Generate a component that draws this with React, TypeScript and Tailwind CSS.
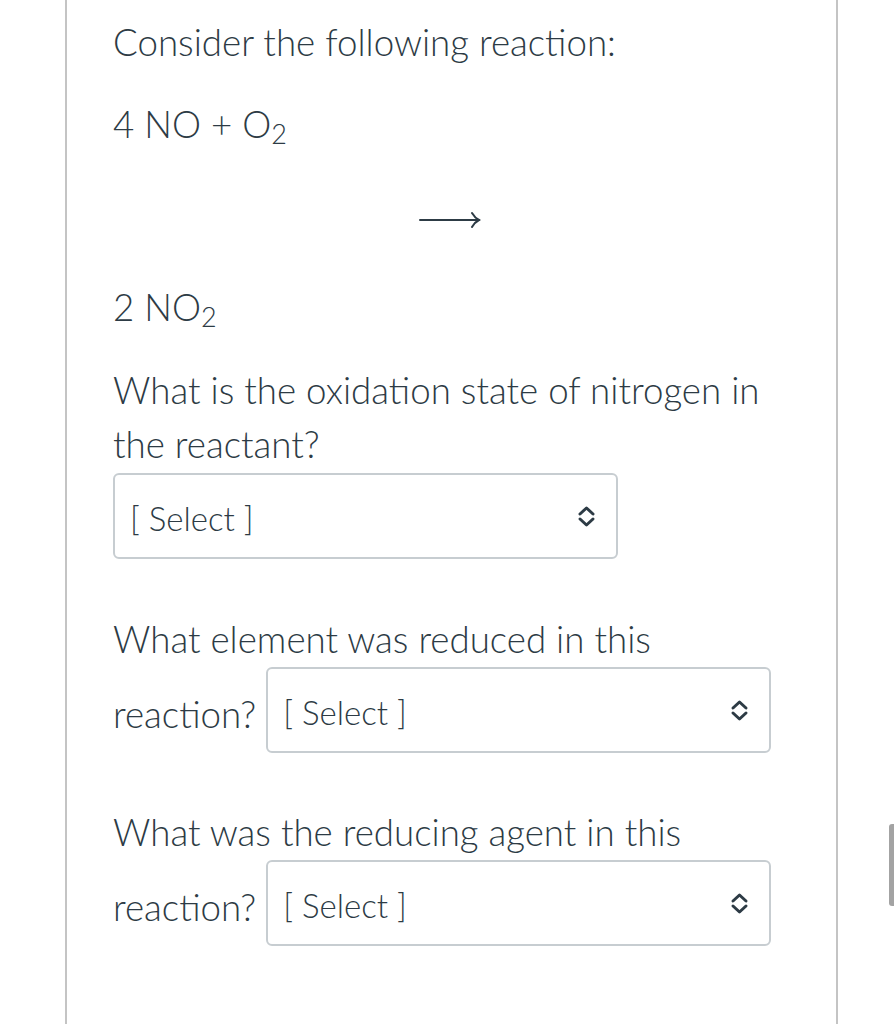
import React from "react";

const Chevron = () => (
  <svg width="19" height="23" viewBox="0 0 19 23" fill="none" stroke="#2d3b45" strokeWidth="3" strokeLinecap="round" strokeLinejoin="round">
    <path d="M3 9 L9.5 3 L16 9" />
    <path d="M3 14 L9.5 20 L16 14" />
  </svg>
);

const SelectBox = ({ className = "" }: { className?: string }) => (
  <div
    className={`flex items-center justify-between h-[86px] w-[505px] shrink-0 border-2 border-[#c7cdd1] rounded-[6px] bg-white pl-[15px] pr-[20px] ${className}`}
  >
    <span className="text-[33px] leading-[54px] pt-[3px] text-[#2d3b45] font-light">[ Select ]</span>
    <Chevron />
  </div>
);

const Arrow = () => (
  <svg width="62" height="20" viewBox="0 0 62 20" fill="none" stroke="#2d3b45" strokeWidth="2" strokeLinecap="round">
    <path d="M1 10 H60" />
    <path d="M53 3 Q56 8 60 10 Q56 12 53 17" />
  </svg>
);

export default function App() {
  return (
    <div className="relative min-h-[1024px] bg-white overflow-hidden" style={{ fontFamily: "Lato, 'Open Sans', sans-serif" }}>
      <div className="ml-[65px] w-[773px] min-h-[1024px] border-x-2 border-[#c4c4c4] pl-[46px] pr-[10px] pt-[15px] text-[#2d3b45] text-[36.7px] font-light leading-[54px]">
        <p>Consider the following reaction:</p>
        <p className="mt-[28px]">
          4 NO + O<sub className="text-[27px] relative top-[6px] align-baseline">2</sub>
        </p>
        <div className="flex justify-center pr-[40px] mt-[59px]">
          <Arrow />
        </div>
        <p className="mt-[50px]">
          2 NO<sub className="text-[27px] relative top-[6px] align-baseline">2</sub>
        </p>
        <p className="mt-[29px]">
          What is the oxidation state of nitrogen in
          <br />
          the reactant?
        </p>
        <SelectBox className="mt-[2px]" />
        <div className="mt-[53px]">
          <p>What element was reduced in this</p>
          <div className="flex items-start gap-[10px] mt-[1px]">
            <span className="mt-[20px]">reaction?</span>
            <SelectBox />
          </div>
        </div>
        <div className="mt-[52px]">
          <p>What was the reducing agent in this</p>
          <div className="flex items-start gap-[10px] mt-[1px]">
            <span className="mt-[20px]">reaction?</span>
            <SelectBox />
          </div>
        </div>
      </div>
      <div className="absolute right-0 top-[824px] w-[5px] h-[82px] bg-[#a3a3a3] rounded-l-[3px]" />
    </div>
  );
}
